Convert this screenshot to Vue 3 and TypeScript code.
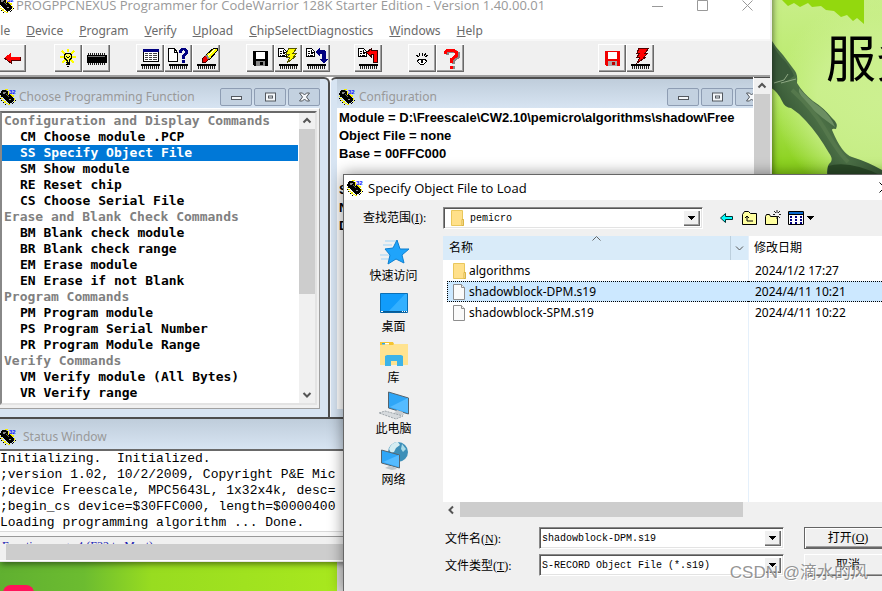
<script setup lang="ts">
import { ref } from 'vue'

interface ToolGroup { gap: number; tools: { icon: string; label: string }[] }
interface Command { text: string; heading?: boolean }
interface FileRow { name: string; date: string; icon: string }

const menus = ['File', 'Device', 'Program', 'Verify', 'Upload', 'ChipSelectDiagnostics', 'Windows', 'Help']

const toolGroups: ToolGroup[] = [
  { gap: 0, tools: [{ icon: 'back', label: 'Back' }] },
  { gap: 28, tools: [{ icon: 'bulb', label: 'Power' }, { icon: 'ic', label: 'Device' }] },
  { gap: 26, tools: [{ icon: 'table', label: 'Choose module' }, { icon: 'docq', label: 'Blank check' }, { icon: 'erase', label: 'Erase' }] },
  { gap: 26, tools: [{ icon: 'disk', label: 'Specify object' }, { icon: 'docbolt', label: 'Program' }, { icon: 'docarrow', label: 'Verify' }] },
  { gap: 24, tools: [{ icon: 'upload', label: 'Upload' }] },
  { gap: 26, tools: [{ icon: 'eye', label: 'Show' }, { icon: 'help', label: 'Help' }] },
  { gap: 134, tools: [{ icon: 'reddisk', label: 'Save' }, { icon: 'redbolt', label: 'Run' }] },
]

const commands: Command[] = [
  { text: 'Configuration and Display Commands', heading: true },
  { text: 'CM Choose module .PCP' },
  { text: 'SS Specify Object File' },
  { text: 'SM Show module' },
  { text: 'RE Reset chip' },
  { text: 'CS Choose Serial File' },
  { text: 'Erase and Blank Check Commands', heading: true },
  { text: 'BM Blank check module' },
  { text: 'BR Blank check range' },
  { text: 'EM Erase module' },
  { text: 'EN Erase if not Blank' },
  { text: 'Program Commands', heading: true },
  { text: 'PM Program module' },
  { text: 'PS Program Serial Number' },
  { text: 'PR Program Module Range' },
  { text: 'Verify Commands', heading: true },
  { text: 'VM Verify module (All Bytes)' },
  { text: 'VR Verify range' },
]
const selectedCommand = ref(2)

const config = [
  'Module = D:\\Freescale\\CW2.10\\pemicro\\algorithms\\shadow\\Free',
  'Object File = none',
  'Base = 00FFC000',
  '',
  'S',
  'N',
  'D',
]

const statusLines = [
  'Initializing.  Initialized.',
  ';version 1.02, 10/2/2009, Copyright P&E Mic',
  ';device Freescale, MPC5643L, 1x32x4k, desc=',
  ';begin_cs device=$30FFC000, length=$0000400',
  'Loading programming algorithm ... Done.',
]

const places = [
  { icon: 'star', label: '快速访问' },
  { icon: 'desk', label: '桌面' },
  { icon: 'library', label: '库' },
  { icon: 'pc', label: '此电脑' },
  { icon: 'network', label: '网络' },
]

const files: FileRow[] = [
  { name: 'algorithms', date: '2024/1/2 17:27', icon: 'folder' },
  { name: 'shadowblock-DPM.s19', date: '2024/4/11 10:21', icon: 'file' },
  { name: 'shadowblock-SPM.s19', date: '2024/4/11 10:22', icon: 'file' },
]
const selectedFile = ref(1)
const fileName = ref('shadowblock-DPM.s19')

function pickFile(i: number) {
  selectedFile.value = i
  fileName.value = files[i].name
}
</script>

<template>
  <div class="desktop">
    <svg class="sprite" aria-hidden="true">
      <symbol id="chip" viewBox="0 0 16 16">
        <path d="M0 7h1v1H0zM1 9h2v1H1zM2 11h2v1H2zM4 12h2v2H4zM6 14h2v1H6zM8 15h2v1H8zM5 0h3v1H5zM8 2h1v2H8zM10 5h2v1h-2zM12 7h2v1h-2zM14 9h1v2h-1zM14 12h1v1h-1z" fill="#f4ee00" />
        <path d="M2 1h4l1 1h1v2h1v1h1v1h1v1h1v1h1v1h1v3h-1v1h-1v1h-2v1H9v-1H8v-1H7v-1H6v-1H5v-1H4V9H3V8H1V6H0V4h1V2h1z" fill="#000" />
        <path d="M3 3h3v1H5v1H3z" fill="#8a8a8a" /><path d="M6 5h1v1h1v1h1v1H8V7H7V6H6z" fill="#666" />
        <path d="M9 10h2v1H9z" fill="#999" />
        <path d="M0 9h1v1H0zM1 11h1v1H1zM3 13h1v1H3zM5 15h1v1H5zM13 13h1v1h-1zM12 14h1v1h-1zM15 11h1v1h-1z" fill="#000" />
        <path d="M8 4h1v2H8zM11 6h3v1h-3z" fill="#f4ee00" />
        <text x="9" y="5" font-size="6" font-weight="700" font-family="Liberation Sans, sans-serif" fill="#0010ff">32</text>
      </symbol>
      <symbol id="comb" viewBox="0 0 28 28">
        <path d="M5 20h19v2H5z" fill="#000" />
        <path d="M6 22h1v3H6zM8 22h1v3H8zM10 22h1v3h-1zM12 22h1v3h-1zM14 22h1v3h-1zM16 22h1v3h-1zM18 22h1v3h-1zM20 22h1v3h-1zM22 22h1v3h-1z" fill="#222" />
      </symbol>
      <symbol id="minidoc" viewBox="0 0 28 28">
        <path d="M4.500 4.500h5l3 3v5h-8z" fill="#fff" stroke="#000" />
        <path d="M6 7.500h2M9 6v2h3M6 9.500h2M9 9.500h2M6 11.500h1M8 11.500h3" stroke="#000" fill="none" />
      </symbol>
      <symbol id="back" viewBox="0 0 28 28">
        <path d="M6 14l7-5v4h9v3h-9v3z" fill="#f00" /><path d="M13 16v3l-7-5M13 16.500h9V13" fill="none" stroke="#500" />
      </symbol>
      <symbol id="bulb" viewBox="0 0 28 28">
        <path d="M14 5v3M6 13h4M18 13h4M8 7l3 3M20 7l-3 3M8 19l3-3M20 19l-3-3" stroke="#ff0" stroke-width="2" />
        <path d="M11 10l2-1h2l2 1 1 2v2l-2 3v3h-4v-3l-2-3v-2z" fill="#ff0" />
        <path d="M11 10.500l1-1h4l1 1 .5 2-.5 2-2 2v3h-2v-3l-2-2-.5-2z" fill="#ff4" stroke="#000" />
        <path d="M12 12l2 2 2-2M12 18h4M12 20h4M13 22h2" stroke="#000" fill="none" />
      </symbol>
      <symbol id="ic" viewBox="0 0 28 28">
        <path d="M6.500 9v3M8.500 9v3M10.500 9v3M12.500 9v3M14.500 9v3M16.500 9v3M18.500 9v3M20.500 9v3M22.500 9v3M6.500 18v3M8.500 18v3M10.500 18v3M12.500 18v3M14.500 18v3M16.500 18v3M18.500 18v3M20.500 18v3M22.500 18v3" stroke="#222" />
        <path d="M5 11h20v8H5z" fill="#000" /><path d="M6 12.500h17" stroke="#777" />
      </symbol>
      <symbol id="table" viewBox="0 0 28 28">
        <path d="M7.500 5.500h15v12h-15z" fill="#fff" stroke="#000" /><path d="M7 5h16v3H7z" fill="#000080" />
        <path d="M9 9.500h3M13 9.500h3M17 9.500h4M9 11.500h3M13 11.500h3M17 11.500h4M9 13.500h3M13 13.500h3M17 13.500h4M9 15.500h3M13 15.500h3M17 15.500h4" stroke="#444" />
        <use href="#comb" />
      </symbol>
      <symbol id="docq" viewBox="0 0 28 28">
        <path d="M4.500 4.500h6l3 4v9h-9z" fill="#fff" stroke="#000" /><path d="M10.500 4.500v4h3" fill="none" stroke="#000" />
        <path d="M16.500 9V7l2-2h2l2 2v2l-3 3v3M19.500 16v2.500" fill="none" stroke="#000080" stroke-width="2.500" />
        <use href="#comb" />
      </symbol>
      <symbol id="erase" viewBox="0 0 28 28">
        <path d="M14 11l8-7h3v3l-8 9z" fill="#ff0" stroke="#000" /><path d="M14 14l9-9" stroke="#fff" />
        <path d="M11 14l3-3 3 4-3 3-3 1-1-2z" fill="#e00" stroke="#400" /><path d="M14 11l3 4" stroke="#888" stroke-width="2" />
        <use href="#comb" />
      </symbol>
      <symbol id="disk" viewBox="0 0 28 28">
        <path d="M7 7h15v14l-1 1H8l-1-1z" fill="#000" /><path d="M10 8h9v7h-9z" fill="#fff" />
        <path d="M10 17h9v5h-9z" fill="#888" /><path d="M14 18h3v3h-3z" fill="#000" />
      </symbol>
      <symbol id="docbolt" viewBox="0 0 28 28">
        <use href="#minidoc" />
        <path d="M15 4h8l-4 5h4l-3 3h2l-9 7 3-6h-3l3-3h-4z" fill="#ff0" stroke="#550" /><use href="#comb" />
      </symbol>
      <symbol id="docarrow" viewBox="0 0 28 28">
        <use href="#minidoc" />
        <path d="M13 8l5-4v2h4l2 2v7h2l-4 5-5-5h3V10h-2v2z" fill="#000080" /><use href="#comb" />
      </symbol>
      <symbol id="upload" viewBox="0 0 28 28">
        <use href="#minidoc" />
        <path d="M12.500 8.500l5-4v2h5.500v12h-4v-8h-1.500v2.500z" fill="#f00" stroke="#300" /><use href="#comb" />
      </symbol>
      <symbol id="eye" viewBox="0 0 28 28">
        <path d="M9 17l3-2h4l3 2-3 3h-4z" fill="#fff" stroke="#000" /><path d="M13 16h2v3h-2z" fill="#000" />
        <path d="M8 11l3 2M11 9l1 3M14 9v3M18 9l-2 3M20 11l-3 2" stroke="#000" />
      </symbol>
      <symbol id="help" viewBox="0 0 28 28">
        <path d="M10 10V8l3-2h5l3 2v4l-5 4v3M15 22h3" transform="translate(1 1)" fill="none" stroke="#888" stroke-width="3" />
        <path d="M9 10V8l3-2h5l3 2v4l-5 4v3M14 23h3" fill="none" stroke="#f00" stroke-width="3" />
      </symbol>
      <symbol id="reddisk" viewBox="0 0 28 28">
        <path d="M7 7h15v14l-1 1H8l-1-1z" fill="#f00000" /><path d="M10 8h9v7h-9z" fill="#fff" />
        <path d="M10 17h9v5h-9z" fill="#aaa" /><path d="M14 18h3v3h-3z" fill="#b00" />
      </symbol>
      <symbol id="redbolt" viewBox="0 0 28 28">
        <path d="M13 4h10l-4 5h3l-4 4h2l-9 6 3-6h-3l3-4h-3z" fill="#f00" stroke="#500" /><use href="#comb" />
      </symbol>
      <symbol id="star" viewBox="0 0 32 32">
        <path d="M7 5h11M5 9h9M7 13h7M2 19h9M3 23h8" stroke="#9fd4f7" stroke-width="1" />
        <path d="M19 4l3 9 9 0-7 6 2 8-8-4-8 5 2-9-5-6 8-1z" fill="#1fa4fb" stroke="#0c7fd0" />
      </symbol>
      <symbol id="desk" viewBox="0 0 32 32">
        <path d="M2.500 6.500h27v19h-27z" fill="#119cfb" stroke="#0a6fb5" /><path d="M10 25L27 7h2v18z" fill="#33b0ff" />
        <path d="M3 24h26v1.500H3z" fill="#075a94" /><path d="M3 24.500h2M24 24.500h1M26 24.500h1M28 24.500h1" stroke="#fff" />
      </symbol>
      <symbol id="library" viewBox="0 0 32 32">
        <path d="M2 5l1-1h11l2 2h14v21H2z" fill="#ffe390" /><path d="M2 4h13l1 2-1 1H2z" fill="#f5c431" />
        <path d="M4 5h7v1.500H4z" fill="#fff" /><path d="M4 5h3v1.500H4z" fill="#2fa7df" />
        <path d="M7 28V18l2-1h14l2 1v10h-6v-5h-6v5z" fill="#3cb3e8" />
      </symbol>
      <symbol id="pc" viewBox="0 0 32 32">
        <path d="M10.500 3l20 6v16l-20-6z" fill="#2fa6f7" stroke="#56646e" /><path d="M12 18L30 9v15z" fill="#55bbff" />
        <path d="M19 21l6 2 1 3-8 0-2-2z" fill="#c9ced2" /><path d="M1 24l6-2 18 5-7 3z" fill="#d6dadd" stroke="#9ea5aa" stroke-dasharray="2 1" />
      </symbol>
      <symbol id="network" viewBox="0 0 32 32">
        <circle cx="20" cy="12" r="10" fill="#3d8fb8" /><path d="M11 9c2-5 5-7 9-7l2 3-4 3-2 4-3 1z" fill="#d5edf2" /><path d="M24 4l4 5-3 3-2-3z" fill="#a9dbe8" />
        <path d="M3.500 10l18 5v13l-18-5z" fill="#2fa6f7" stroke="#56646e" /><path d="M5 22l16-7v12z" fill="#55bbff" />
        <path d="M11 26l5 1 3 2-5 1-7-2z" fill="#bfc6ca" />
      </symbol>
      <symbol id="folder" viewBox="0 0 16 16">
        <path d="M1.500.5h11v9h1v6h-12z" fill="#ffe08a" stroke="#e9c75c" /><path d="M12 9.500h1.500v6H12z" fill="#fff0bd" stroke="#dcb545" />
      </symbol>
      <symbol id="file" viewBox="0 0 16 16">
        <path d="M1.500.5h8l3 3v12h-11z" fill="#fafafa" stroke="#8e8e8e" /><path d="M9.500.5v3h3" fill="#eee" stroke="#8e8e8e" />
      </symbol>
      <symbol id="drop" viewBox="0 0 9 5"><path d="M1 0h7v1H7v1H6v1H5v1H4V3H3V2H2V1H1z" fill="#000" /></symbol>
    </svg>

    <svg class="wallpaper" viewBox="0 0 882 591" preserveAspectRatio="xMaxYMin slice" aria-hidden="true">
      <defs>
        <linearGradient id="leaf" x1="0" y1="0" x2="0" y2="1">
          <stop offset="0" stop-color="#c8ee88" /><stop offset=".5" stop-color="#b8ea68" /><stop offset="1" stop-color="#82cc10" />
        </linearGradient>
        <radialGradient id="glow" cx="880" cy="100" r="105" gradientUnits="userSpaceOnUse">
          <stop offset="0" stop-color="#ccf090" /><stop offset=".6" stop-color="#ccf090" stop-opacity=".9" /><stop offset="1" stop-color="#ccf090" stop-opacity="0" />
        </radialGradient>
        <linearGradient id="bark" x1="770" y1="110" x2="800" y2="90" gradientUnits="userSpaceOnUse" spreadMethod="reflect">
          <stop offset="0" stop-color="#2f4f30" /><stop offset="1" stop-color="#4c7046" />
        </linearGradient>
        <linearGradient id="grass" x1="0" y1="0" x2="1" y2="0">
          <stop offset="0" stop-color="#60b030" /><stop offset=".25" stop-color="#6cbc30" /><stop offset=".45" stop-color="#98dc20" /><stop offset="1" stop-color="#a8e81e" />
        </linearGradient>
      </defs>
      <rect width="882" height="560" fill="#b8ea68" />
      <rect x="770" width="112" height="180" fill="url(#leaf)" />
      <rect x="770" width="112" height="180" fill="url(#glow)" />
      <path d="M782 0h82v24l-7-6-4 3-6-6-6 2-7-6-8-1-5-4-9 1-4-4-8 4-6-4-6 3z" fill="#93d80e" />
      <path d="M770 38Q776 48 783 55L795 71Q798 75 797 83Q803 93 813 101Q824 108 832 118Q839 124 836 129Q832 128 832 130Q842 154 852 157Q868 162 882 170V182H828Q825 166 831 162Q833 158 829 153Q818 134 806 121Q799 113 791 108Q785 108 782 101Q778 92 770 87z" fill="url(#bark)" />
      <path d="M770 40Q777 54 785 61Q792 70 794 76L784 83Q776 78 770 82z" fill="#3a5a3a" />
      <path d="M799 88Q808 99 820 107Q831 116 835 127Q822 118 812 109Q803 101 799 92z" fill="#6c8e62" />
      <path d="M774 83L784 80M781 83L796 79M784 80L788 74" stroke="#8fa984" fill="none" stroke-width="1" />
      <path d="M792 90Q812 108 824 128Q838 152 848 162" stroke="#55784c" fill="none" stroke-width="4" />
      <path d="M828 166Q850 160 882 176V182H828z" fill="#2b4a28" />
      <rect y="556" width="337" height="35" fill="url(#grass)" />
      <rect x="337" y="556" width="10" height="35" fill="#d8d8d8" />
    </svg>
    <p class="note">服务器</p>
    <span class="badge"></span>

    <main class="app-window">
      <header class="title-bar">
        <svg class="chip"><use href="#chip" /></svg>
        <h1>PROGPPCNEXUS Programmer for CodeWarrior 128K Starter Edition - Version 1.40.00.01</h1>
        <div class="caption-buttons">
          <button type="button" aria-label="Minimize"><svg viewBox="0 0 11 11"><path d="M0 6.500h11" /></svg></button>
          <button type="button" aria-label="Maximize"><svg viewBox="0 0 11 11"><path d="M.5.5h10v10H.5z" /></svg></button>
          <button type="button" aria-label="Close"><svg viewBox="0 0 11 11"><path d="M.5.5l10 10M10.500.5l-10 10" /></svg></button>
        </div>
      </header>
      <nav class="menu">
        <a v-for="m in menus" :key="m" href="#"><u>{{ m[0] }}</u>{{ m.slice(1) }}</a>
      </nav>
      <div class="toolbar">
        <div v-for="(g, i) in toolGroups" :key="i" class="tool-group" :style="{ marginLeft: g.gap + 'px' }">
          <button v-for="t in g.tools" :key="t.icon" type="button" :aria-label="t.label">
            <svg shape-rendering="crispEdges"><use :href="'#' + t.icon" /></svg>
          </button>
        </div>
      </div>

      <div class="workspace">
        <div class="children">
          <section class="child functions">
            <header class="child-title">
              <svg class="chip"><use href="#chip" /></svg>
              <h2>Choose Programming Function</h2>
              <div class="child-buttons">
                <button type="button" aria-label="Minimize"><svg viewBox="0 0 12 12"><rect x="1" y="5.500" width="10" height="3" /></svg></button>
                <button type="button" aria-label="Maximize"><svg viewBox="0 0 12 12"><rect x="1" y="2" width="10" height="8" /><rect x="4" y="5" width="4" height="2" /></svg></button>
                <button type="button" aria-label="Close"><svg viewBox="0 0 12 12"><path d="M1 2h3l2 2 2-2h3L8 6l3 4H8L6 8l-2 2H1l3-4z" /></svg></button>
              </div>
            </header>
            <div class="panel">
              <div class="list-frame">
                <ul role="listbox" aria-label="Programming functions">
                  <li v-for="(c, i) in commands" :key="i" :role="c.heading ? 'presentation' : 'option'"
                    :class="{ heading: c.heading, selected: i === selectedCommand }"
                    @click="c.heading || (selectedCommand = i)">{{ c.text }}</li>
                </ul>
                <div class="scroll-v">
                  <svg viewBox="0 0 16 16"><path d="M4.500 9.500L8 6l3.500 3.500" /></svg>
                  <span class="thumb"></span>
                  <svg viewBox="0 0 16 16"><path d="M4.500 6L8 9.500 11.500 6" /></svg>
                </div>
              </div>
            </div>
          </section>

          <section class="child config">
            <header class="child-title">
              <svg class="chip"><use href="#chip" /></svg>
              <h2>Configuration</h2>
              <div class="child-buttons">
                <button type="button" aria-label="Minimize"><svg viewBox="0 0 12 12"><rect x="1" y="5.500" width="10" height="3" /></svg></button>
                <button type="button" aria-label="Maximize"><svg viewBox="0 0 12 12"><rect x="1" y="2" width="10" height="8" /><rect x="4" y="5" width="4" height="2" /></svg></button>
                <button type="button" aria-label="Close"><svg viewBox="0 0 12 12"><path d="M1 2h3l2 2 2-2h3L8 6l3 4H8L6 8l-2 2H1l3-4z" /></svg></button>
              </div>
            </header>
            <div class="config-text">
              <p v-for="(line, i) in config" :key="i">{{ line }}</p>
            </div>
          </section>

          <section class="child status">
            <header class="child-title">
              <svg class="chip"><use href="#chip" /></svg>
              <h2>Status Window</h2>
            </header>
            <div class="log">
              <p v-for="line in statusLines" :key="line">{{ line }}</p>
            </div>
            <p class="log-foot">Function range 4 (F32 to Most)</p>
          </section>
        </div>
        <div class="scroll-v main-scroll">
          <svg viewBox="0 0 16 16"><path d="M4.500 9.500L8 6l3.500 3.500" /></svg>
          <span class="thumb"></span>
        </div>
      </div>
      <div class="scroll-h"><span class="thumb"></span></div>
    </main>

    <section class="dialog" role="dialog" aria-labelledby="dialog-title">
      <header class="dialog-title">
        <svg class="chip"><use href="#chip" /></svg>
        <h2 id="dialog-title">Specify Object File to Load</h2>
        <button type="button" aria-label="关闭"><svg viewBox="0 0 11 11"><path d="M.5.5l10 10M10.500.5l-10 10" /></svg></button>
      </header>

      <div class="look-in">
        <label for="folder-select">查找范围(<u>I</u>):</label>
        <div class="combo with-icon">
          <svg class="combo-icon"><use href="#folder" /></svg>
          <select id="folder-select"><option>pemicro</option></select>
          <span class="arrow"><svg><use href="#drop" /></svg></span>
        </div>
        <div class="nav-buttons">
          <button type="button" aria-label="后退"><svg viewBox="0 0 16 16"><path d="M1.500 8l5-4.500v3h7v3h-7v3z" fill="#0ff" stroke="#033" /></svg></button>
          <button type="button" aria-label="向上一级"><svg viewBox="0 0 16 16"><path d="M.5 4.500l2-3h4l2 2h6v11H.5z" fill="#ffffa0" stroke="#000" /><path d="M5 6v5h6M3 8l2-2 2 2" fill="none" stroke="#000" /></svg></button>
          <button type="button" aria-label="新建文件夹"><svg viewBox="0 0 16 16"><path d="M.5 6.500l1-2h3l1 2h7v8H.5z" fill="#ffffa0" stroke="#000" /><path d="M12 0v3M12 6v3M8 4.500h2M14 4.500h2M9 1l2 2M15 1l-2 2M15 8l-2-2" stroke="#222" /></svg></button>
          <button type="button" class="view" aria-label="视图">
            <svg viewBox="0 0 16 16"><path d="M.5 1.500h15v13H.5z" fill="#fff" stroke="#000" /><path d="M1 2h14v2H1z" fill="#0a6bd0" /><path d="M0 4h16v1H0z" fill="#000" /><path d="M2 6h2v2H2zM2 9h2v2H2zM2 12h2v2H2zM7 6h2v2H7zM7 9h2v2H7zM7 12h2v2H7zM12 6h2v2h-2zM12 9h2v2h-2zM12 12h2v2h-2z" fill="#000080" /></svg>
            <svg class="drop"><use href="#drop" /></svg>
          </button>
        </div>
      </div>

      <div class="browser">
        <nav class="places">
          <a v-for="p in places" :key="p.icon" href="#">
            <svg><use :href="'#' + p.icon" /></svg>
            <span>{{ p.label }}</span>
          </a>
        </nav>
        <div class="pane">
          <div class="table-area">
            <table>
              <thead>
                <tr>
                  <th class="name-col">名称
                    <svg class="sort" viewBox="0 0 9 5"><path d="M.5 4.500l4-4 4 4" /></svg>
                    <span class="filter"><svg viewBox="0 0 9 5"><path d="M1 .5L4.500 4 8 .5" /></svg></span>
                  </th>
                  <th>修改日期</th>
                </tr>
              </thead>
              <tbody>
                <tr v-for="(f, i) in files" :key="f.name" :class="{ selected: i === selectedFile }" @click="pickFile(i)">
                  <td><div class="cell file-cell"><svg><use :href="'#' + f.icon" /></svg>{{ f.name }}</div></td>
                  <td class="date"><div class="cell">{{ f.date }}</div></td>
                </tr>
              </tbody>
            </table>
          </div>
          <div class="scroll-h list-scroll">
            <svg viewBox="0 0 16 16"><path d="M10 4.500L6.500 8l3.500 3.500" /></svg>
            <span class="thumb"></span>
          </div>
        </div>
      </div>

      <form class="fields" @submit.prevent>
        <label for="file-name">文件名(<u>N</u>):</label>
        <div class="combo">
          <input id="file-name" v-model="fileName" type="text" spellcheck="false" />
          <span class="arrow"><svg><use href="#drop" /></svg></span>
        </div>
        <button type="submit" class="default">打开(<u>O</u>)</button>
        <label for="file-type">文件类型(<u>T</u>):</label>
        <div class="combo">
          <select id="file-type"><option>S-RECORD Object File (*.s19)</option></select>
          <span class="arrow"><svg><use href="#drop" /></svg></span>
        </div>
        <button type="button">取消</button>
      </form>
    </section>

    <span class="watermark">CSDN @滴水的风</span>
  </div>
</template>

<style>
html, body { overflow: hidden; }
</style>

<style scoped>
.desktop {
  position: relative;
  height: 100vh;
  overflow: hidden;
  background: #9fdc40;
  font: 12px/16px "Noto Sans", "Noto Sans CJK SC", sans-serif;
  color: #000;
}
.desktop * { box-sizing: border-box; }
h1, h2 { font-size: inherit; font-weight: 400; }
h1, h2, p, ul { margin: 0; padding: 0; }
a { color: inherit; text-decoration: none; }
button { padding: 0; border: 0; background: none; font: inherit; color: inherit; }
svg { display: block; flex: none; }
.sprite { position: absolute; width: 0; height: 0; }
.wallpaper { position: absolute; inset: 0; width: 100%; height: 100%; }
.chip { width: 16px; height: 16px; }

.note {
  position: absolute;
  top: 26px;
  left: calc(100% - 56px);
  font: 50px/58px "Noto Sans CJK SC", sans-serif;
  white-space: nowrap;
}
.badge { position: absolute; left: 3px; bottom: -14px; width: 31px; height: 20px; border-radius: 8px; background: #ff145a; }

/* application window */
.app-window {
  position: absolute;
  top: -10px;
  left: 0;
  right: 110px;
  bottom: 29px;
  display: flex;
  flex-direction: column;
  background: #fff;
  border-right: 2px solid #f0f0f0;
  border-bottom: 1px solid #e6e6e6;
  box-shadow: 1px 2px 6px rgba(0, 0, 0, .5);
}
.title-bar { display: flex; align-items: center; height: 30px; color: #999; white-space: nowrap; }
.title-bar .chip { margin-left: -2px; }
.title-bar h1, .dialog-title h2 { font: 13px/16px "Open Sans", "Noto Sans", sans-serif; }
.title-bar h1 { flex: 1; padding-left: 2px; }
.caption-buttons { display: flex; }
.caption-buttons button { display: grid; place-items: center; width: 45px; height: 30px; }
.caption-buttons svg, .dialog-title button svg { width: 11px; height: 11px; fill: none; stroke: #999; }
.menu { display: flex; gap: 16px; height: 19px; margin-left: -9px; line-height: 22px; color: #6a6a6a; white-space: nowrap; }
.toolbar {
  display: flex;
  align-items: center;
  height: 38px;
  background: #f0f0f0;
  border-top: 2px solid #f7f7f7;
  border-bottom: 2px solid #a0a0a0;
}
.tool-group { display: flex; }
.tool-group:first-child { width: 26px; justify-content: flex-end; }
.toolbar button {
  width: 28px;
  height: 28px;
  flex: none;
  background: #f0f0f0;
  box-shadow: inset 1px 1px #fff, inset -1px -1px #696969, inset -2px -2px #a0a0a0;
}
.toolbar svg { width: 28px; height: 28px; }

.workspace { flex: 1; min-height: 0; display: flex; }
.children {
  flex: 1;
  min-width: 0;
  display: grid;
  grid-template-columns: 330px 1fr;
  grid-template-rows: 340px 1fr;
  overflow: hidden;
}
.child { display: flex; flex-direction: column; min-width: 0; min-height: 0; background: #d7e4f2; border-top: 2px solid #4d4d4d; }
.child-title {
  display: flex;
  align-items: center;
  flex: none;
  height: 29px;
  padding-top: 6px;
  background: linear-gradient(#bfcddb, #d7e4f2);
  color: #999;
  white-space: nowrap;
}
.child-title h2 { flex: 1; padding-left: 3px; }
.child-buttons { display: flex; gap: 2px; }
.child-buttons button { display: grid; place-items: center; width: 32px; height: 18px; border: 1px solid #8e9db3; border-radius: 2px; background: #c3d1e0; }
.child-buttons svg { width: 13px; height: 12px; fill: #f4f7fa; stroke: #53585f; }
.functions { border-right: 2px solid #4d4d4d; border-top-right-radius: 6px; padding-right: 8px; }
.panel { flex: 1; min-height: 0; margin: 0 0 8px; background: #f0f0f0; border: solid; border-width: 1px 1px 1px 0; border-color: #fff #a0a0a0 #a0a0a0; padding: 2px 2px 3px 0; }
.list-frame { display: flex; height: 100%; border: 2px solid; border-color: #696969 #e3e3e3 #e3e3e3 #888; background: #fff; }
.list-frame ul { flex: 1; list-style: none; font: 700 13px/16px "DejaVu Sans Mono", "Liberation Mono", monospace; overflow: hidden; }
.list-frame li { height: 16px; padding-left: 18px; white-space: pre; }
.list-frame li.heading { padding-left: 2px; color: #808080; }
.list-frame li.selected { background: #0078d7; color: #fff; }
.scroll-v { display: flex; flex-direction: column; flex: none; width: 16px; margin-left: 1px; background: #f0f0f0; }
.scroll-v svg, .list-scroll svg { width: 16px; height: 16px; fill: none; stroke: #555; stroke-width: 2; }
.scroll-v .thumb { flex: 1; background: #cdcdcd; }
.functions .thumb { flex: none; height: 57%; margin: 0 0 auto; }
.main-scroll { border-top: 1px solid #4d4d4d; }

.config { min-width: calc(100% + 22px); border-left: 1px solid #f4f7fb; border-top-left-radius: 6px; padding: 0 8px 8px 6px; }
.config .child-title { padding-left: 2px; }
.config .chip { margin-right: 1px; }
.config-text { flex: 1; min-height: 0; overflow: hidden; background: #fff; padding: 1px 2px; font: 700 13px/18px "Liberation Sans", sans-serif; white-space: pre; }
.config-text p { height: 18px; }

.status { grid-column: 1 / -1; background: #f8f8f8; }
.status .child-title { height: 30px; }
.status h2 { padding-left: 7px; }
.log { border-top: 2px solid #696969; border-bottom: 1px solid #d9d9d9; background: #fff; font: 13px/16px "Liberation Mono", monospace; white-space: pre; }
.log-foot { flex: 1; min-height: 0; margin-top: 4px; padding: 1px 2px; overflow: hidden; border-top: 1px solid #999; background: #f0f0f0; color: #1b1bb0; font-family: "Liberation Serif", serif; }
.scroll-h { display: flex; flex: none; height: 17px; padding-left: 6px; background: #f0f0f0; border-bottom: 1px solid #fff; }
.scroll-h .thumb { flex: 1; background: #cdcdcd; }

/* file dialog */
.dialog {
  position: absolute;
  top: 174px;
  left: 343px;
  right: -18px;
  bottom: 0;
  display: flex;
  flex-direction: column;
  background: #f0f0f0;
  border: solid #666;
  border-width: 1px 0 0 1px;
  box-shadow: 0 0 14px rgba(0, 0, 0, .45);
}
.dialog-title { display: flex; align-items: center; flex: none; height: 25px; padding: 0 10px 0 3px; background: #fff; }
.dialog-title h2 { flex: 1; padding-left: 5px; }
.dialog-title button svg { stroke: #000; }
.look-in, .fields, .places { font: 12px/16px "Liberation Serif", "Noto Sans CJK SC", serif; }
.look-in { display: flex; align-items: center; flex: none; height: 36px; }
.look-in label { width: 99px; padding-left: 19px; white-space: nowrap; }
.combo { position: relative; display: flex; height: 22px; padding: 2px; background: #fff; border: 1px solid; border-color: #888 #fff #fff #888; box-shadow: inset 1px 1px #555, inset -1px -1px #e3e3e3; }
.combo select, .combo input {
  flex: 1;
  min-width: 0;
  padding: 2px 20px 0 0;
  border: 0;
  outline: 0;
  appearance: none;
  background: transparent;
  color: #000;
  font: 10px/14px "Liberation Mono", monospace;
}
.arrow {
  display: grid;
  place-items: center;
  width: 17px;
  background: #f0f0f0;
  pointer-events: none;
  box-shadow: inset 1px 1px #fff, inset -1px -1px #696969, inset -2px -2px #a0a0a0;
}
.arrow svg, .drop { width: 9px; height: 5px; }
.look-in .combo { width: 260px; }
.combo-icon { width: 16px; height: 16px; margin: 0 4px; align-self: center; }
.nav-buttons { display: flex; align-items: center; gap: 7px; padding-left: 16px; }
.nav-buttons svg { width: 16px; height: 16px; }
.nav-buttons .view { display: flex; align-items: center; gap: 2px; }
.nav-buttons .drop { width: 9px; height: 5px; }

.browser { flex: 1; min-height: 0; display: flex; }
.places { width: 99px; flex: none; }
.places a { display: flex; flex-direction: column; align-items: center; height: 51px; }
.places svg { width: 32px; height: 32px; }
.pane { flex: 1; min-width: 0; display: flex; flex-direction: column; }
.table-area { flex: 1; min-height: 0; background: linear-gradient(#e5f0fb, #e5f0fb) 305px 0 / 1px 100% no-repeat #fff; }
table { width: 100%; table-layout: fixed; border-collapse: collapse; }
th { position: relative; height: 24px; padding: 0 6px; text-align: left; font-weight: 400; }
.name-col { width: 305px; background: #d9ebf9; }
.sort { position: absolute; top: 0; left: 149px; width: 9px; height: 5px; fill: none; stroke: #666; }
.filter { position: absolute; inset: 0 0 0 auto; width: 18px; display: grid; place-items: center; border-left: 1px solid #bccfdd; }
.filter svg { width: 9px; height: 5px; fill: none; stroke: #555; }
td { height: 21px; padding: 0 0 0 4px; }
td.date { padding: 0; }
.cell { display: flex; align-items: center; height: 21px; border: 1px dotted transparent; border-width: 1px 0; }
.date .cell { padding-left: 7px; }
.file-cell { border-left-width: 1px; padding-left: 4px; gap: 1px; }
.file-cell svg { width: 16px; height: 16px; }
.selected .cell { background: #cce8ff; border-color: #000; }
.list-scroll { height: 15px; padding: 0; border: 0; }
.list-scroll svg { margin: 0 1px 0 0; }
.list-scroll .thumb { flex: none; width: 62%; }

.fields {
  display: grid;
  grid-template-columns: 94px 245px 88px;
  grid-template-rows: 22px 22px;
  gap: 5px 0;
  flex: none;
  height: 74px;
  padding: 10px 0 0 101px;
  align-items: center;
}
.fields label { padding-top: 2px; }
.fields button { justify-self: start; width: 88px; height: 22px; margin-left: 20px; background: #f0f0f0; box-shadow: inset 1px 1px #fff, inset -1px -1px #696969, inset -2px -2px #a0a0a0; }
.fields button.default { border: 1px solid #646464; }

.watermark {
  position: absolute;
  right: 14px;
  bottom: 6px;
  font: 17px/24px "Liberation Sans", "Noto Sans CJK SC", sans-serif;
  color: rgba(130, 130, 130, .85);
  text-shadow: 1px 1px #fff;
  white-space: nowrap;
  pointer-events: none;
}
</style>
